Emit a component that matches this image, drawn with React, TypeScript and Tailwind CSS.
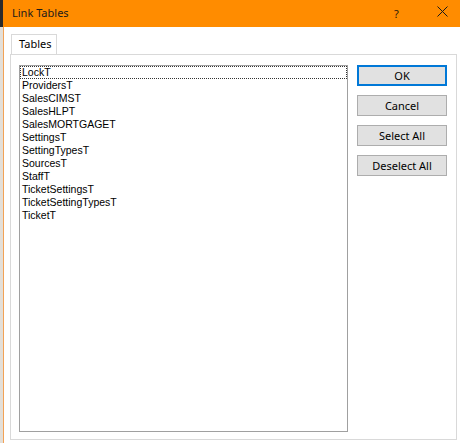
import React from "react";

const items = [
  "LockT",
  "ProvidersT",
  "SalesCIMST",
  "SalesHLPT",
  "SalesMORTGAGET",
  "SettingsT",
  "SettingTypesT",
  "SourcesT",
  "StaffT",
  "TicketSettingsT",
  "TicketSettingTypesT",
  "TicketT",
];

const ui = { fontFamily: '"Noto Sans", "Open Sans", sans-serif' };
const list = { fontFamily: '"Liberation Sans", Arial, sans-serif' };

function Btn({ label, primary }: { label: string; primary?: boolean }) {
  return (
    <div
      className={
        "w-[90px] h-[21px] flex items-center justify-center bg-[#e1e1e1] text-[11px] text-black leading-none " +
        (primary ? "border-2 border-[#0078d7]" : "border border-[#adadad]")
      }
      style={ui}
    >
      {label}
    </div>
  );
}

export default function App() {
  return (
    <div className="w-[460px] h-[443px] flex bg-white overflow-hidden">
      <div className="w-[3px] flex flex-col">
        <div className="h-[27px] bg-[#2b2b2b]" />
        <div className="flex-1 bg-[#e4dfd8]" />
      </div>
      <div className="flex-1 flex flex-col min-w-0">
        <div className="h-[27px] bg-[#ff8c00] flex items-center pl-[9px] relative">
          <span className="text-[11px] text-[#1a1a1a]" style={ui}>
            Link Tables
          </span>
          <span className="absolute left-[391px] top-[6px] text-[11px] text-[#2a1a0a]" style={ui}>
            ?
          </span>
          <svg className="absolute left-[434px] top-[6px]" width="11" height="11" viewBox="0 0 11 11">
            <path d="M0.5 0.5 L10.5 10.5 M10.5 0.5 L0.5 10.5" stroke="#1a1a1a" strokeWidth="1" />
          </svg>
        </div>
        <div className="flex-1 border-l border-[#f3a255] bg-white pl-[6px] pt-[7px] flex flex-col">
          <div className="ml-[1px] w-[46px] h-[20px] border border-b-0 border-[#d9d9d9] bg-white flex items-center pl-[7px]">
            <span className="text-[11px] text-black" style={ui}>
              Tables
            </span>
          </div>
          <div className="w-[447px] h-[386px] border border-[#d9d9d9] flex pl-[8px] pt-[10px]">
            <div className="w-[329px] h-[367px] border border-[#a0a0a0] bg-white flex flex-col text-[10.5px] text-black" style={list}>
              {items.map((it, i) => (
                <div
                  key={it}
                  className={
                    "h-[13px] leading-[13px] pl-[2px] whitespace-nowrap " +
                    (i === 0 ? "outline outline-1 outline-dotted outline-[#333] -outline-offset-1" : "")
                  }
                >
                  {it}
                </div>
              ))}
            </div>
            <div className="ml-[9px] flex flex-col gap-[9px]">
              <Btn label="OK" primary />
              <Btn label="Cancel" />
              <Btn label="Select All" />
              <Btn label="Deselect All" />
            </div>
          </div>
        </div>
      </div>
    </div>
  );
}
